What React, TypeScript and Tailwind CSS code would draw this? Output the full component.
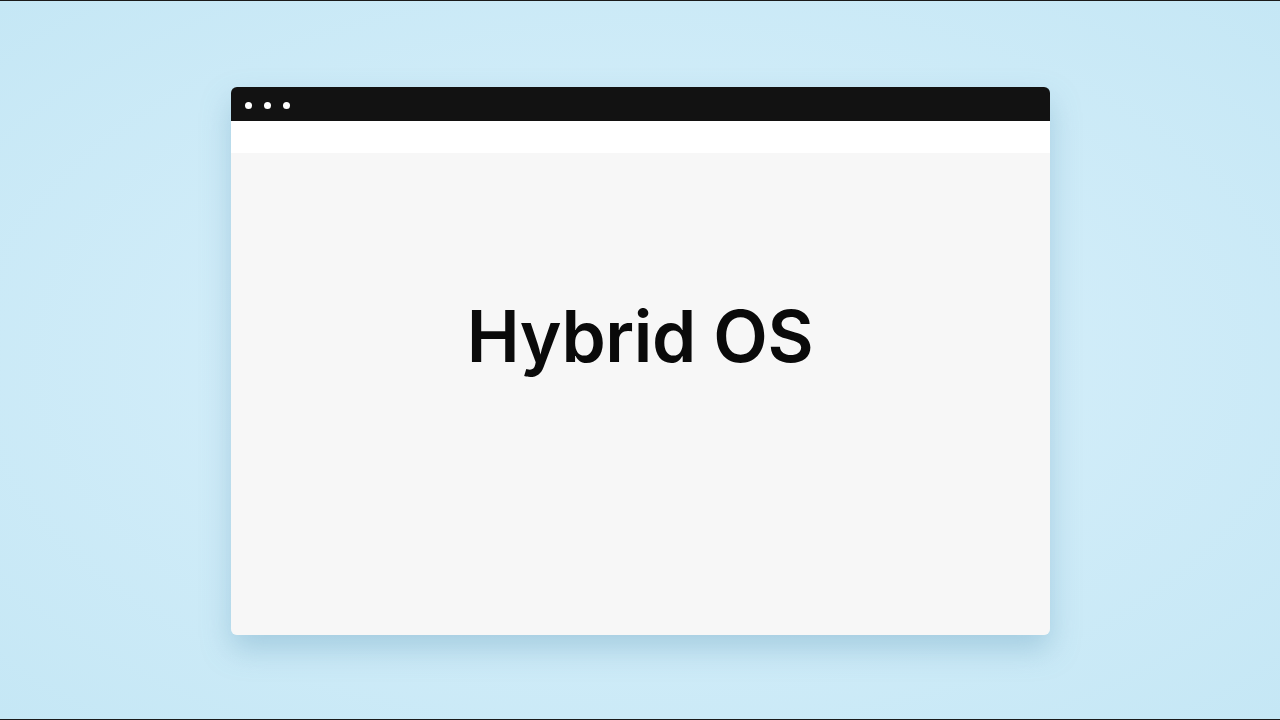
export default function App() {
  return (
    <div className="w-[1280px] h-[720px] flex flex-col bg-[#c6e7f5]">
      <div className="h-[1px] bg-[#1a1a1a]" />
      <div className="flex-1 flex items-start justify-center pt-[86px] bg-[radial-gradient(ellipse_at_center,#d9f0fa_0%,#d2edf9_40%,#c5e7f5_100%)]">
        <div className="w-[819px] h-[548px] rounded-[6px] overflow-hidden flex flex-col shadow-[0_14px_30px_rgba(90,150,180,0.35)]">
          <div className="h-[34px] bg-[#121212] flex items-center gap-[12px] pl-[14px] pt-[3px]">
            <span className="w-[7px] h-[7px] rounded-full bg-white" />
            <span className="w-[7px] h-[7px] rounded-full bg-white" />
            <span className="w-[7px] h-[7px] rounded-full bg-white" />
          </div>
          <div className="h-[32px] bg-white" />
          <div className="flex-1 bg-[#f7f7f7] flex justify-center pt-[138px]">
            <h1
              className="text-[71px] leading-[90px] font-semibold text-[#0a0a0a] tracking-[-0.4px]"
              style={{ fontFamily: "Inter, 'Noto Sans', sans-serif" }}
            >
              Hybrid OS
            </h1>
          </div>
        </div>
      </div>
      <div className="h-[1px] bg-[#1a1a1a]" />
    </div>
  );
}
